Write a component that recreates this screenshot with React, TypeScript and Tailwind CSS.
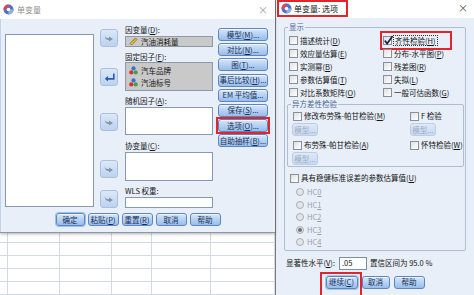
import React from 'react';

type Kids = { children?: React.ReactNode; className?: string };

function U({ c }: { c: string }) {
  return <span className="underline underline-offset-1">{c}</span>;
}

function SpssIcon() {
  return (
    <svg width="11" height="11" viewBox="0 0 11 11" className="shrink-0">
      <circle cx="5.5" cy="5.5" r="5" fill="#4d74c4" />
      <path d="M5.5 0.5 A5 5 0 0 0 0.5 5.5 L5.5 5.5 Z" fill="#e2405e" />
      <path d="M10.5 5.5 A5 5 0 0 1 5.5 10.5 L5.5 5.5 Z" fill="#8fb0e8" />
      <circle cx="5.5" cy="5.5" r="1.8" fill="#fff" />
    </svg>
  );
}

function RulerIcon() {
  return (
    <svg width="9" height="9" viewBox="0 0 9 9" className="shrink-0">
      <path d="M1 6.5 L6.5 1 L8 2.5 L2.5 8 Z" fill="#f2cf3a" stroke="#6b5a12" strokeWidth="0.7" />
      <path d="M3 4.5 L3.8 5.3 M4.3 3.2 L5.1 4 M5.6 1.9 L6.4 2.7" stroke="#6b5a12" strokeWidth="0.6" />
    </svg>
  );
}

function NominalIcon() {
  return (
    <svg width="9" height="9" viewBox="0 0 9 9" className="shrink-0">
      <circle cx="4.5" cy="2.4" r="2.1" fill="#3c6fd0" />
      <circle cx="2.3" cy="6.4" r="2.1" fill="#d9302f" />
      <circle cx="6.7" cy="6.4" r="2.1" fill="#3aa34a" />
    </svg>
  );
}

function Arrow({ active, className = '' }: { active?: boolean; className?: string }) {
  return (
    <div
      className={`flex h-[18px] w-[18px] shrink-0 items-center justify-center rounded-[3px] border border-[#a9c1df] bg-linear-to-b from-[#dce8f8] to-[#bcd2ee] ${className}`}
    >
      {active ? (
        <svg width="11" height="9" viewBox="0 0 11 9">
          <path d="M9 0.5 V5 H4 V3 L0.8 5.8 L4 8.6 V6.8 H10.6 V0.5 Z" fill="#2a5cad" />
        </svg>
      ) : (
        <svg width="10" height="8" viewBox="0 0 10 8">
          <path d="M0.8 1 Q1 4.3 5 4.3 V2.4 L9 5 L5 7.6 V6 Q0.6 6 0.8 1 Z" fill="#8593a7" />
        </svg>
      )}
    </div>
  );
}

function BlueBtn({ children, className = '' }: Kids) {
  return (
    <div
      className={`flex shrink-0 items-center justify-center whitespace-nowrap rounded-[3px] border border-[#5b86bf] bg-linear-to-b from-[#d6e6fa] via-[#b7d1f2] to-[#98bdea] text-[#162f58] shadow-[inset_0_1px_0_#eef5ff] ${className}`}
    >
      {children}
    </div>
  );
}

function GrayBtn({ className = '' }: { className?: string }) {
  return (
    <div
      className={`flex h-[13px] w-[26px] items-center justify-center rounded-[3px] border border-[#bccde4] bg-linear-to-b from-[#dfe9f8] to-[#c6d8f0] text-[#9dadc3] ${className}`}
    >
      模型...
    </div>
  );
}

function Box({ checked }: { checked?: boolean }) {
  return (
    <span className="relative flex h-[9px] w-[9px] shrink-0 border border-[#8c9096] bg-linear-to-br from-[#dfe1e4] to-white">
      {checked && (
        <svg width="11" height="11" viewBox="0 0 11 11" className="absolute -left-[1px] -top-[2px]">
          <path d="M1.8 5.6 L4.2 8.6 L9.6 1" fill="none" stroke="#14264a" strokeWidth="1.7" />
        </svg>
      )}
    </span>
  );
}

function Check({ children, checked, className = '' }: Kids & { checked?: boolean }) {
  return (
    <div className={`flex items-center gap-[2px] whitespace-nowrap ${className}`}>
      <Box checked={checked} />
      <span>{children}</span>
    </div>
  );
}

function Radio({ n, on }: { n: string; on?: boolean }) {
  return (
    <div className="flex h-[12.5px] items-center gap-[3px] text-[#9a9fa6]">
      <span className="flex h-[8px] w-[8px] items-center justify-center rounded-full border border-[#a9adb3] bg-[#e3e5e8]">
        {on && <span className="h-[4px] w-[4px] rounded-full bg-[#6d7178]" />}
      </span>
      <span>
        HC<U c={n} />
      </span>
    </div>
  );
}

function LeftDialog() {
  return (
    <div className="relative z-10 flex h-[233px] shrink-0 flex-col border-b border-[#8d96a3] shadow-[0_1px_3px_rgba(0,0,0,0.3)]">
      <div className="flex h-[19px] shrink-0 items-center bg-white pl-[3px] pr-[7px]">
        <SpssIcon />
        <span className="ml-[3px] text-[8px] text-[#8e8e8e]">单变量</span>
        <span className="ml-auto text-[10px] text-[#a0a0a0]">×</span>
      </div>
      <div className="flex flex-1 flex-col border-l border-[#c2d2e8] bg-[#e8eff9]">
        <div className="flex h-[194px] shrink-0 pl-[4px]">
          <div className="mt-[15px] h-[173px] w-[89px] border border-[#8798b0] bg-white" />

          <div className="ml-[6px] flex w-[18px] flex-col">
            <Arrow className="mt-[10px]" />
            <Arrow active className="mt-[21px]" />
            <Arrow className="mt-[27px]" />
            <Arrow className="mt-[29px]" />
            <Arrow className="mt-[12px]" />
          </div>

          <div className="ml-[7px] flex w-[88px] flex-col">
            <div className="mt-[6px] h-[10px]">
              因变量(<U c="D" />):
            </div>
            <div className="mt-[1px] flex h-[11px] items-center gap-[3px] border border-[#8e99a8] bg-[#c9c9c9] pl-[3px]">
              <RulerIcon />
              <span>汽油消耗量</span>
            </div>
            <div className="mt-[5px] h-[10px]">
              固定因子(<U c="F" />):
            </div>
            <div className="flex h-[29px] flex-col justify-center gap-[1px] border border-[#8e99a8] bg-[#c9c9c9] pl-[3px]">
              <div className="flex h-[11px] items-center gap-[3px]">
                <NominalIcon />
                <span>汽车品牌</span>
              </div>
              <div className="flex h-[11px] items-center gap-[3px]">
                <NominalIcon />
                <span>汽油标号</span>
              </div>
            </div>
            <div className="mt-[5px] h-[10px]">
              随机因子(<U c="A" />):
            </div>
            <div className="mt-[1px] h-[28px] border border-[#8798b0] bg-white" />
            <div className="mt-[6px] h-[10px]">
              协变量(<U c="C" />):
            </div>
            <div className="mt-[1px] h-[29px] border border-[#8798b0] bg-white" />
            <div className="mt-[5px] h-[10px]">WLS 权重:</div>
            <div className="mt-[1px] h-[11px] border border-[#8798b0] bg-white" />
          </div>

          <div className="ml-[5px] mt-[9px] flex w-[50px] flex-col gap-[2.2px]">
            <BlueBtn className="h-[13px]">
              模型(<U c="M" />)...
            </BlueBtn>
            <BlueBtn className="h-[13px]">
              对比(<U c="N" />)...
            </BlueBtn>
            <BlueBtn className="h-[13px]">
              图(<U c="T" />)...
            </BlueBtn>
            <BlueBtn className="h-[13px]">
              事后比较(<U c="H" />)...
            </BlueBtn>
            <BlueBtn className="h-[13px]">EM 平均值...</BlueBtn>
            <BlueBtn className="h-[13px]">
              保存(<U c="S" />)...
            </BlueBtn>
            <div className="-mx-[2px] -my-[2px] border-2 border-[#e0262c] p-0">
              <BlueBtn className="h-[13px]">
                选项(<U c="O" />)...
              </BlueBtn>
            </div>
            <BlueBtn className="h-[13px]">
              自助抽样(<U c="B" />)...
            </BlueBtn>
          </div>
        </div>

        <div className="flex justify-center gap-[3px]">
          <BlueBtn className="h-[13px] w-[29px] border-[#2d5590] ring-1 ring-[#9cc0ea]">确定</BlueBtn>
          <BlueBtn className="h-[13px] w-[31px]">
            粘贴(<U c="P" />)
          </BlueBtn>
          <BlueBtn className="h-[13px] w-[31px]">
            重置(<U c="R" />)
          </BlueBtn>
          <BlueBtn className="h-[13px] w-[31px]">取消</BlueBtn>
          <BlueBtn className="h-[13px] w-[31px]">帮助</BlueBtn>
        </div>
      </div>
    </div>
  );
}

const sheetRows = ['h-[10px]', 'h-[13px]', 'h-[13px]', 'h-[13px]', 'h-[13px]'];
const sheetCols = ['w-[8px]', 'w-[52px]', 'w-[52px]', 'w-[40px]', 'w-[59px]', 'w-[64px]'];

function Sheet() {
  return (
    <div className="flex flex-1 flex-col overflow-hidden bg-white">
      {sheetRows.map((r, i) => (
        <div key={i} className={`flex shrink-0 border-b border-[#d4dae2] ${r}`}>
          {sheetCols.map((c, j) => (
            <div key={j} className={`shrink-0 border-r border-[#d4dae2] ${c}`} />
          ))}
        </div>
      ))}
    </div>
  );
}

function RightDialog() {
  return (
    <div className="flex flex-1 flex-col border-l border-[#7a7a7a]">
      <div className="flex h-[18px] shrink-0 items-start bg-white pr-[6px]">
        <div className="ml-[1px] flex h-[17px] w-[71px] items-center gap-[2px] border-2 border-[#e0262c] pl-[2px]">
          <SpssIcon />
          <span className="text-[8px] text-[#111]">单变量: 选项</span>
        </div>
        <span className="ml-auto mt-[3px] text-[10px] text-[#555]">×</span>
      </div>

      <div className="flex flex-1 flex-col bg-[#e8eff9]">
        <fieldset className="ml-[8px] mt-[4px] w-[182px] rounded-[2px] border border-[#adbdd2] pb-[1px] pl-[4px] pr-[1px]">
          <legend className="ml-[-1px] px-[1px] text-[#4a6591]">显示</legend>
          <div className="mt-[2px] grid grid-cols-[94px_1fr] auto-rows-[13px] items-center">
            <Check>
              描述统计(<U c="D" />)
            </Check>
            <div className="-my-[3px] -ml-[3px] mr-[12px] flex h-[19px] items-center border-2 border-[#e0262c] pl-[1px]">
              <Box checked />
              <span className="ml-[1px] whitespace-nowrap border border-dotted border-[#333] px-[1px] leading-[9px]">
                齐性检验(<U c="H" />)
              </span>
            </div>
            <Check>
              效应量估算(<U c="E" />)
            </Check>
            <Check>
              分布-水平图(<U c="P" />)
            </Check>
            <Check>
              实测幂(<U c="B" />)
            </Check>
            <Check>
              残差图(<U c="R" />)
            </Check>
            <Check>
              参数估算值(<U c="T" />)
            </Check>
            <Check>
              失拟(<U c="L" />)
            </Check>
            <Check>
              对比系数矩阵(<U c="O" />)
            </Check>
            <Check>
              一般可估函数(<U c="G" />)
            </Check>
          </div>

          <fieldset className="-ml-[2px] w-[177px] rounded-[2px] border border-[#adbdd2] pb-[1px] pl-[5px]">
            <legend className="ml-[-2px] px-[1px] text-[#4a6591]">异方差性检验</legend>
            <div className="grid grid-cols-[117px_1fr]">
              <div className="flex flex-col">
                <Check className="mt-[1px] h-[12px]">
                  修改布劳殊-帕甘检验(<U c="M" />)
                </Check>
                <GrayBtn className="-ml-[1px] mt-[1px]" />
                <Check className="mt-[3px] h-[12px]">
                  布劳殊-帕甘检验(<U c="A" />)
                </Check>
                <GrayBtn className="-ml-[1px] mt-[1px]" />
              </div>
              <div className="flex flex-col">
                <Check className="mt-[1px] h-[12px]">F 检验</Check>
                <GrayBtn className="mt-[1px] w-[24px]" />
                <Check className="mt-[3px] h-[12px]">
                  怀特检验(<U c="W" />)
                </Check>
              </div>
            </div>
          </fieldset>

          <Check className="ml-[1px] mt-[5px] h-[12px]">
            具有稳健标准误差的参数估算值(<U c="U" />)
          </Check>
          <div className="ml-[7px] mt-[2px] flex flex-col">
            <Radio n="0" />
            <Radio n="1" />
            <Radio n="2" />
            <Radio n="3" on />
            <Radio n="4" />
          </div>
        </fieldset>

        <div className="mt-[6px] flex h-[13px] items-center pl-[10px]">
          <span className="w-[53px] whitespace-nowrap">
            显著性水平(<U c="V" />):
          </span>
          <div className="flex h-[13px] w-[28px] items-center border border-[#7f8ea3] bg-white pl-[2px]">.05</div>
          <span className="ml-[3px] whitespace-nowrap">置信区间为 95.0 %</span>
        </div>

        <div className="mt-[6px] flex justify-center gap-[4px]">
          <div className="-mb-[8px] -ml-[6px] -mr-[4px] -mt-[4px] border-2 border-[#e0262c] pb-[6px] pl-[4px] pr-[2px] pt-[2px]">
            <BlueBtn className="h-[13px] w-[32px] border-[#2d5590] ring-1 ring-[#a5c6ee]">
              继续(<U c="C" />)
            </BlueBtn>
          </div>
          <BlueBtn className="h-[13px] w-[28px]">取消</BlueBtn>
          <BlueBtn className="h-[13px] w-[31px]">帮助</BlueBtn>
        </div>
      </div>
    </div>
  );
}

export default function App() {
  return (
    <div className="flex h-[295px] w-[474px] overflow-hidden bg-white font-['Noto_Sans_CJK_SC','Liberation_Sans',sans-serif] text-[7.5px] leading-[10px] text-[#141414]">
      <div className="flex w-[275px] shrink-0 flex-col">
        <LeftDialog />
        <Sheet />
      </div>
      <RightDialog />
    </div>
  );
}
